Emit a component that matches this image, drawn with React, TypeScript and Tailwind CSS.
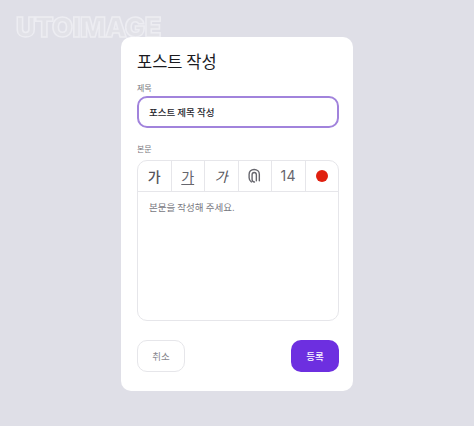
import React from 'react';

const font = { fontFamily: '"Noto Sans CJK KR", Inter, sans-serif' };

const Toolbar = () => (
  <div className="flex h-[31px] border-b border-[#e6e6ea] text-[#55555c]">
    <button className="flex-1 border-r border-[#e6e6ea] text-[14px] font-medium leading-none">가</button>
    <button className="flex-1 border-r border-[#e6e6ea] text-[14px] leading-none text-[#66666d] underline underline-offset-2">가</button>
    <button className="flex-1 border-r border-[#e6e6ea] text-[14px] italic leading-none">가</button>
    <button className="flex flex-1 items-center justify-center border-r border-[#e6e6ea]">
      <svg width="13" height="16" viewBox="0 0 14 16" fill="none" stroke="#66666d" strokeWidth="1.5" strokeLinecap="round">
        <path d="M3.6 14.4C2 13.4 1.2 11.8 1.2 10V6.2C1.2 3.2 3.4 1 6.6 1s5.6 2.2 5.6 5.2v7" />
        <path d="M7 14.4C5.4 14.4 4.4 13.2 4.4 11.8V6.6c0-1.4 1-2.4 2.3-2.4S9 5.2 9 6.6v6.6" />
      </svg>
    </button>
    <div className="flex flex-1 items-center justify-center border-r border-[#e6e6ea] text-[14px] leading-none tracking-[0.5px] text-[#66666d]" style={{ fontFamily: 'Inter, sans-serif' }}>14</div>
    <div className="flex flex-1 items-center justify-center">
      <span className="h-3 w-3 rounded-full bg-[#e0200f]" />
    </div>
  </div>
);

export default function App() {
  return (
    <div className="relative flex h-[426px] w-[474px] items-start justify-center overflow-hidden bg-[#dfdfe7] pt-[37px]" style={font}>
      <div className="absolute left-[16px] top-[12px] text-[27px] font-black leading-[32px] tracking-[-0.5px] text-[#e2e2e8] blur-[0.5px]" style={{ fontFamily: 'Inter, sans-serif', WebkitTextStroke: '1.5px #ededf2' }}>
        UTOIMAGE
      </div>
      <div className="relative flex h-[354px] w-[232px] flex-col rounded-[10px] bg-white pb-[19px] pl-4 pr-[14px] pt-[12px]">
        <h1 className="text-[16.5px] leading-[24px] text-[#1b1b1f]">포스트 작성</h1>
        <label className="mt-[9px] text-[8px] leading-[12px] text-[#77777e]">제목</label>
        <div className="mt-[2px] flex h-[32px] items-center rounded-[10px] border-2 border-[#a183dc] px-[10px] text-[9.5px] font-medium text-[#25252b]">
          포스트 제목 작성
        </div>
        <label className="mt-[15px] text-[8px] leading-[12px] text-[#77777e]">본문</label>
        <div className="mt-[5px] flex h-[161px] flex-col rounded-[10px] border border-[#e6e6ea]">
          <Toolbar />
          <p className="px-[11px] pt-[8px] text-[9.5px] leading-[14px] text-[#77777e]">본문을 작성해 주세요.</p>
        </div>
        <div className="mt-auto flex items-center justify-between">
          <button className="h-8 w-12 rounded-[10px] border border-[#e6e6ea] text-[9.5px] text-[#88888f]">취소</button>
          <button className="h-8 w-12 rounded-[10px] bg-[#6d2fe0] text-[9.5px] font-medium text-white">등록</button>
        </div>
      </div>
    </div>
  );
}
